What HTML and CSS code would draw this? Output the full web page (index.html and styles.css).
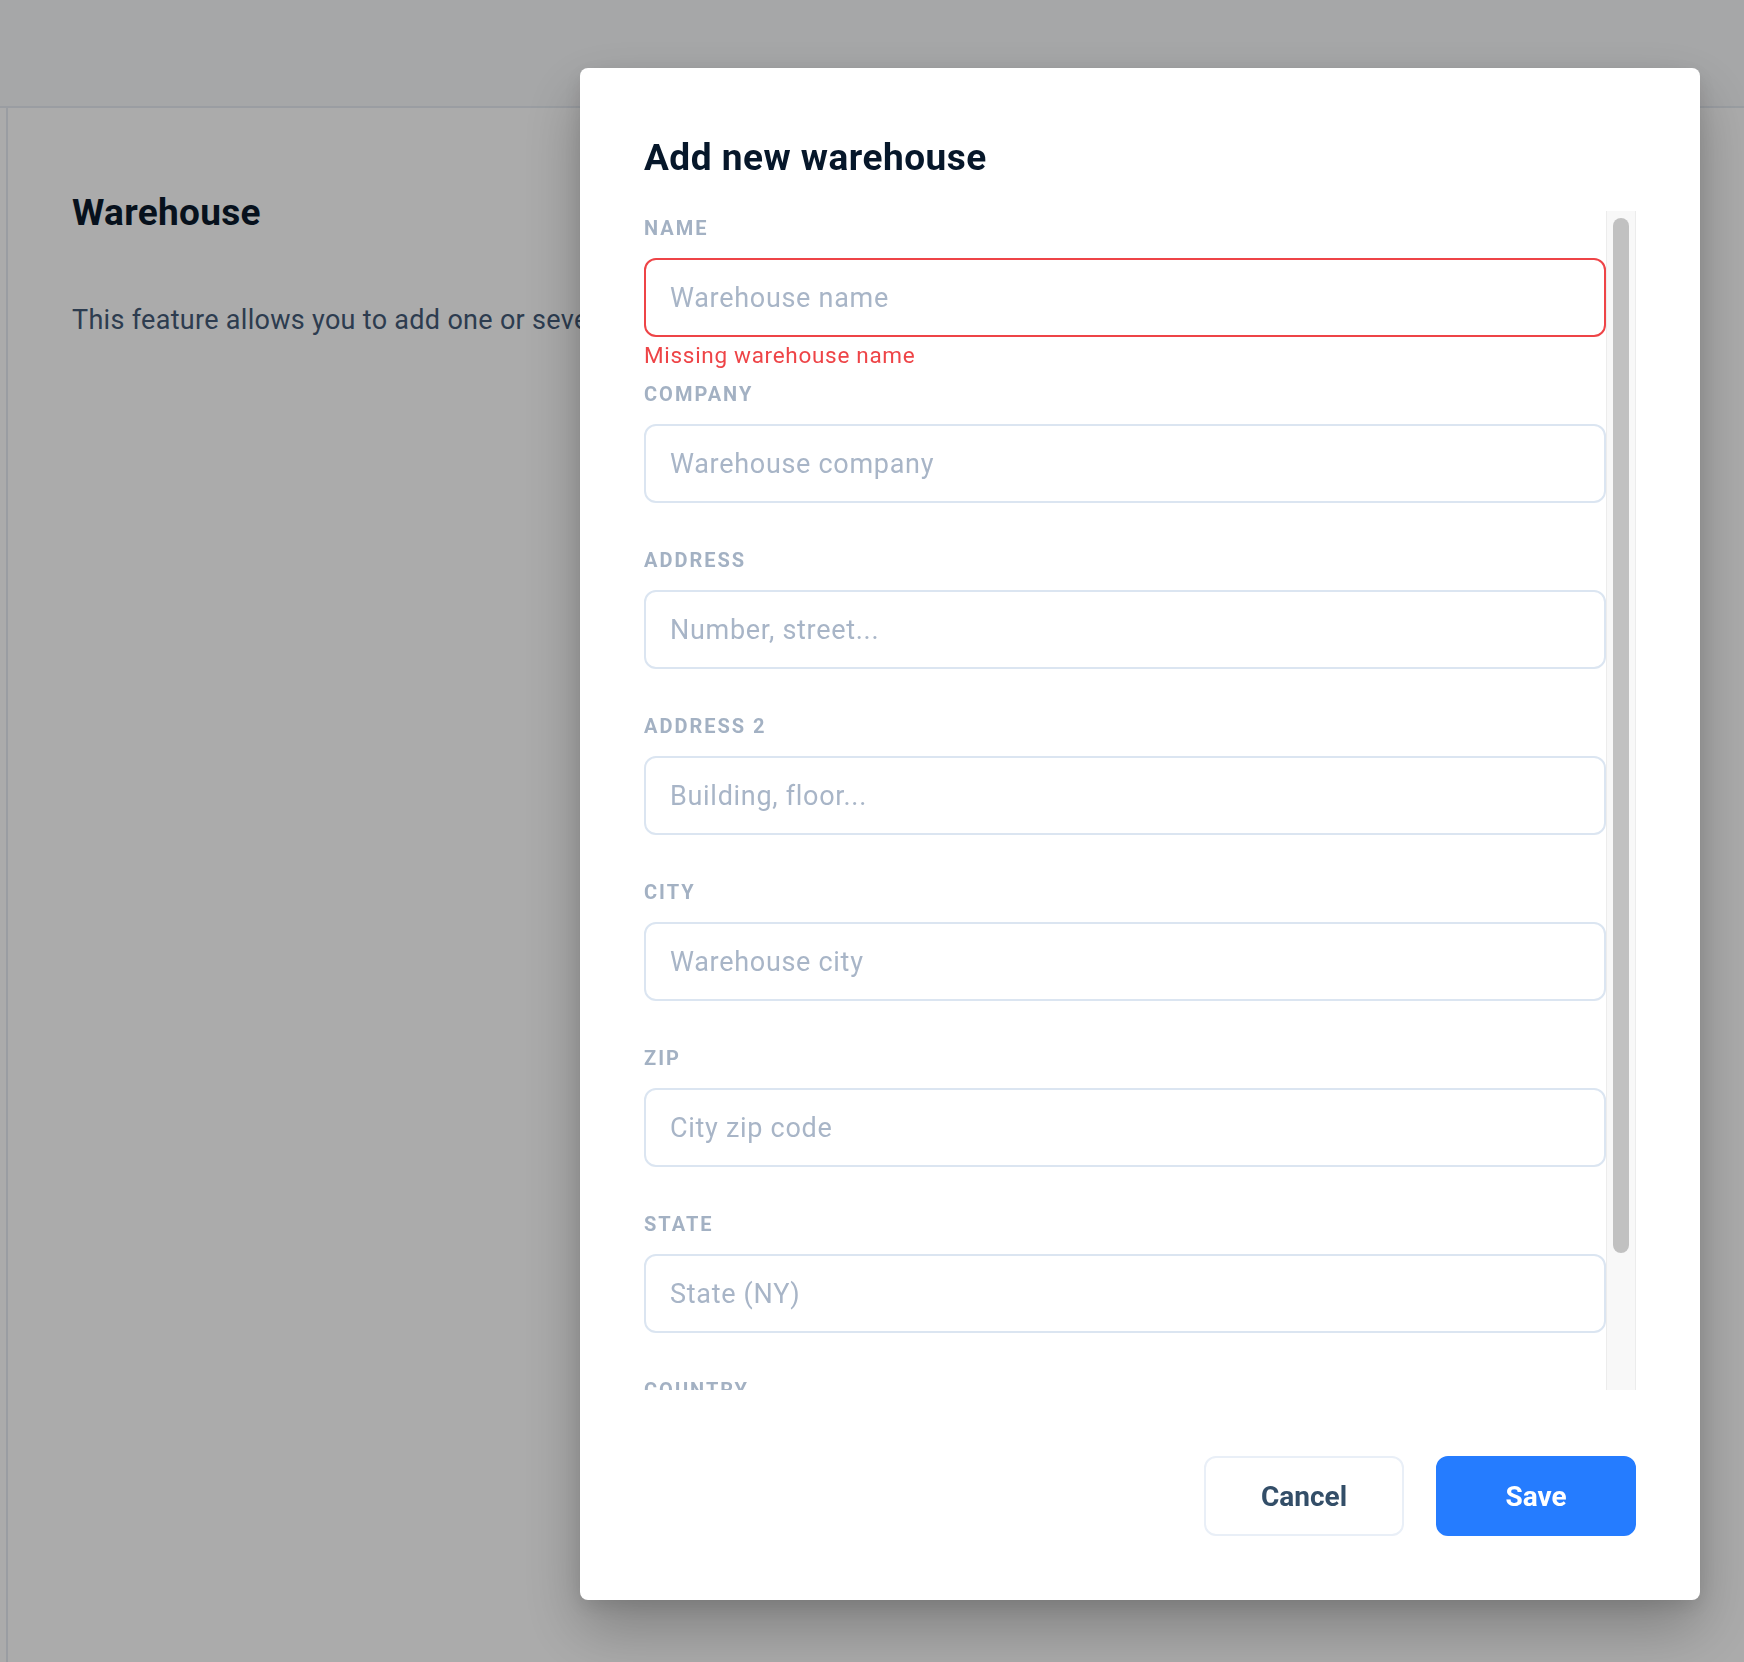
FILE: index.html
```html
<!DOCTYPE html>
<html lang="en">
<head>
<meta charset="utf-8">
<title>Warehouse</title>
<link rel="stylesheet" href="styles.css">
</head>
<body>
<div class="app">
  <header class="topbar"></header>
  <div class="layout">
    <aside class="sidebar"></aside>
    <main class="main">
      <h1 class="page-title">Warehouse</h1>
      <p class="page-desc">This feature allows you to add one or several warehouses to your store.</p>
    </main>
  </div>
</div>

<div class="backdrop">
  <div class="modal">
    <h2 class="modal-title">Add new warehouse</h2>
    <div class="modal-body">
      <div class="fields">
        <div class="field">
          <label class="field-label">NAME</label>
          <input class="field-input is-invalid" type="text" placeholder="Warehouse name">
          <div class="field-hint">Missing warehouse name</div>
        </div>
        <div class="field">
          <label class="field-label">COMPANY</label>
          <input class="field-input" type="text" placeholder="Warehouse company">
          <div class="field-hint"></div>
        </div>
        <div class="field">
          <label class="field-label">ADDRESS</label>
          <input class="field-input" type="text" placeholder="Number, street...">
          <div class="field-hint"></div>
        </div>
        <div class="field">
          <label class="field-label">ADDRESS 2</label>
          <input class="field-input" type="text" placeholder="Building, floor...">
          <div class="field-hint"></div>
        </div>
        <div class="field">
          <label class="field-label">CITY</label>
          <input class="field-input" type="text" placeholder="Warehouse city">
          <div class="field-hint"></div>
        </div>
        <div class="field">
          <label class="field-label">ZIP</label>
          <input class="field-input" type="text" placeholder="City zip code">
          <div class="field-hint"></div>
        </div>
        <div class="field">
          <label class="field-label">STATE</label>
          <input class="field-input" type="text" placeholder="State (NY)">
          <div class="field-hint"></div>
        </div>
        <div class="field">
          <label class="field-label">COUNTRY</label>
          <input class="field-input" type="text" placeholder="Country">
          <div class="field-hint"></div>
        </div>
      </div>
      <div class="scrollbar"><div class="scrollbar-thumb"></div></div>
    </div>
    <div class="modal-footer">
      <button class="btn btn-cancel" type="button">Cancel</button>
      <button class="btn btn-save" type="button">Save</button>
    </div>
  </div>
</div>
</body>
</html>
```

FILE: styles.css
```css
* {
  box-sizing: border-box;
}

html, body {
  margin: 0;
  padding: 0;
}

body {
  font-family: Roboto, "Liberation Sans", sans-serif;
  background: #ffffff;
  width: 1744px;
  height: 1662px;
  overflow: hidden;
}

.app {
  display: flex;
  flex-direction: column;
  height: 1662px;
}

.topbar {
  height: 108px;
  flex: 0 0 108px;
  background: #f8f9fb;
  border-bottom: 2px solid #e6ebf2;
}

.layout {
  flex: 1;
  display: flex;
}

.sidebar {
  width: 8px;
  flex: 0 0 8px;
  border-right: 2px solid #e6ebf2;
}

.main {
  flex: 1;
  padding: 83px 0 0 64px;
}

.page-title {
  margin: 0;
  font-size: 37px;
  line-height: 44px;
  font-weight: 700;
  letter-spacing: 0.3px;
  color: #0b1a2c;
}

.page-desc {
  margin: 67px 0 0;
  font-size: 27px;
  line-height: 36px;
  letter-spacing: 0.3px;
  color: #435a77;
  white-space: nowrap;
}

.backdrop {
  position: fixed;
  inset: 0;
  background: rgba(0, 0, 0, 0.33);
  display: flex;
  justify-content: flex-end;
  align-items: flex-start;
  padding: 68px 44px 0 0;
}

.modal {
  width: 1120px;
  background: #ffffff;
  border-radius: 8px;
  padding: 64px;
  display: flex;
  flex-direction: column;
  box-shadow: 0 28px 60px rgba(0, 0, 0, 0.26), 0 6px 20px rgba(0, 0, 0, 0.10);
}

.modal-title {
  margin: 0 0 27px;
  font-size: 37px;
  line-height: 52px;
  font-weight: 700;
  letter-spacing: 0.5px;
  color: #06172a;
}

.modal-body {
  display: flex;
  height: 1179px;
}

.fields {
  flex: 1;
  overflow: hidden;
  padding-top: 5px;
}

.field {
  display: flex;
  flex-direction: column;
}

.field-label {
  font-size: 20px;
  line-height: 24px;
  font-weight: 700;
  letter-spacing: 2px;
  color: #a3b1c3;
  margin-bottom: 18px;
}

.field-input {
  height: 79px;
  width: 100%;
  border: 2px solid #dbe5f1;
  border-radius: 12px;
  padding: 0 24px;
  font-family: Roboto, "Liberation Sans", sans-serif;
  font-size: 27px;
  letter-spacing: 0.7px;
  color: #243b53;
  background: #ffffff;
  outline: none;
}

.field-input::placeholder {
  color: #a8b5c7;
}

.field-input.is-invalid {
  border-color: #ee4447;
}

.field-hint {
  height: 28px;
  margin: 4px 0 13px;
  font-size: 22.5px;
  line-height: 28px;
  letter-spacing: 0.7px;
  color: #ee4447;
}

.scrollbar {
  width: 30px;
  flex: 0 0 30px;
  background: #f8f8f8;
  border-left: 1px solid #ececec;
  border-right: 1px solid #ececec;
  padding: 7px 6px 0 6px;
}

.scrollbar-thumb {
  height: 1035px;
  border-radius: 8px;
  background: #c1c1c1;
}

.modal-footer {
  margin-top: 66px;
  display: flex;
  justify-content: flex-end;
  gap: 32px;
}

.btn {
  width: 200px;
  height: 80px;
  border-radius: 12px;
  font-family: Roboto, "Liberation Sans", sans-serif;
  font-size: 28px;
  font-weight: 700;
  cursor: pointer;
}

.btn-cancel {
  background: #ffffff;
  border: 2px solid #e9eff7;
  color: #334e68;
}

.btn-save {
  background: #257cff;
  border: 2px solid #257cff;
  color: #ffffff;
}
```
